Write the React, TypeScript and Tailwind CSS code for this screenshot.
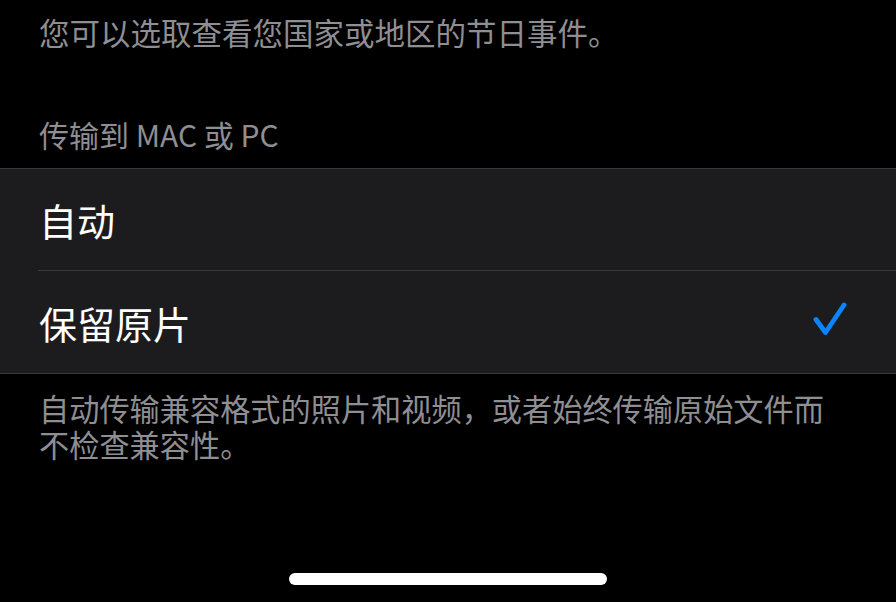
const FONT = "font-['Noto_Sans_CJK_SC','Noto_Sans',sans-serif]";

function CheckMark() {
  return (
    <svg width="40" height="40" viewBox="0 0 40 40" fill="none" className="mr-[44px]">
      <path
        d="M4 17.5 L13.5 30.5 L32 3"
        stroke="#0a84ff"
        strokeWidth="4.8"
        strokeLinecap="round"
        strokeLinejoin="round"
      />
    </svg>
  );
}

export default function App() {
  return (
    <div className={`w-[896px] h-[602px] bg-black flex flex-col overflow-hidden ${FONT}`}>
      <p className="pl-[39px] pt-[14px] text-[30.5px] leading-[37px] text-[#8e8e93]">
        您可以选取查看您国家或地区的节日事件。
      </p>

      <p className="pl-[39px] mt-[65px] text-[30px] leading-[37px] text-[#8e8e93]">
        传输到 MAC 或 PC
      </p>

      <div className="mt-[15px] bg-[#1c1c1e] border-y border-[#38383a]">
        <div className="h-[101px] flex items-center pl-[39px] text-[38px] text-white">自动</div>
        <div className="ml-[38px] h-px bg-[#38383a]" />
        <div className="h-[102px] flex items-center justify-between pl-[39px] text-[38px] text-white">
          <span>保留原片</span>
          <CheckMark />
        </div>
      </div>

      <div className="pl-[39px] mt-[16px] text-[30.2px] text-[#8e8e93]">
        <p className="leading-[36px]">自动传输兼容格式的照片和视频，或者始终传输原始文件而</p>
        <p className="leading-[36px]">不检查兼容性。</p>
      </div>

      <div className="mt-auto mb-[17px] flex justify-center">
        <div className="w-[318px] h-[12px] rounded-full bg-white" />
      </div>
    </div>
  );
}
